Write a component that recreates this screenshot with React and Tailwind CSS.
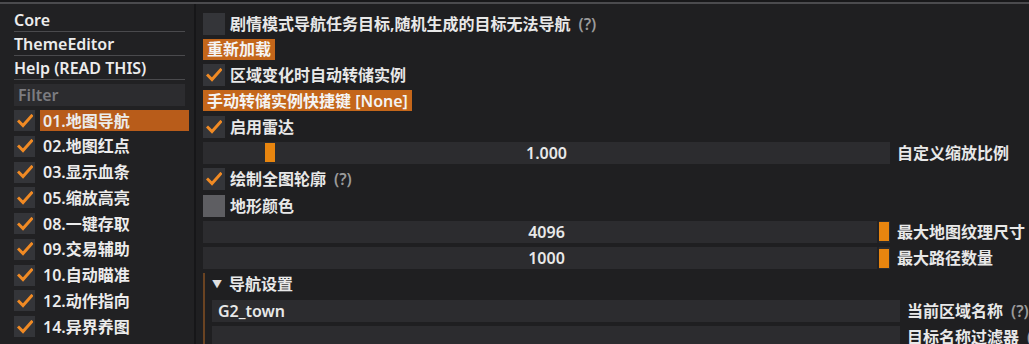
import React from "react";

const FONT = { fontFamily: '"Noto Sans", "Noto Sans CJK SC", sans-serif' };

function Check() {
  return (
    <svg width="16" height="14" viewBox="0 0 16 14">
      <polyline points="2,7.5 6,11.5 14.5,2" fill="none" stroke="#f08a24" strokeWidth="3" strokeLinecap="square" />
    </svg>
  );
}

function Box({ checked, size = "w-[22px] h-[22px]" }) {
  return (
    <div className={`${size} shrink-0 bg-[#343539] flex items-center justify-center`}>
      {checked ? <Check /> : null}
    </div>
  );
}

function Help() {
  return <span className="ml-[8px] text-[16px] leading-none text-[#9a9a9a] font-semibold">(?)</span>;
}

function CheckRow({ checked, label, help }) {
  return (
    <div className="h-[22px] flex items-center">
      <Box checked={checked} />
      <span className="ml-[5px] text-[16px] leading-none text-[#e8e8e8] font-semibold whitespace-nowrap">{label}</span>
      {help ? <Help /> : null}
    </div>
  );
}

function Button({ label }) {
  return (
    <div className="h-[22px] flex items-center">
      <div className="h-[21px] px-[4px] bg-[#c4661a] flex items-center text-[16px] leading-none text-[#f4f4f4] font-semibold whitespace-nowrap">
        {label}
      </div>
    </div>
  );
}

function Slider({ value, label, thumbLeft, thumbRight }) {
  return (
    <div className="h-[22px] flex items-center">
      <div className="relative w-[687px] h-[22px] bg-[#2c2c2f] flex items-center justify-center shrink-0">
        {thumbLeft !== undefined ? (
          <div className="absolute top-[1.5px] w-[10px] h-[19px] bg-[#e8850f]" style={{ left: thumbLeft }} />
        ) : null}
        {thumbRight ? <div className="absolute top-[1.5px] right-[1px] w-[10px] h-[19px] bg-[#e8850f]" /> : null}
        {thumbRight ? <div className="absolute top-0 right-[11px] w-[2px] h-[22px] bg-[#222225]" /> : null}
        <span className="text-[16px] leading-none text-[#e8e8e8] font-semibold">{value}</span>
      </div>
      <span className="ml-[7px] text-[16px] leading-none text-[#e8e8e8] font-semibold whitespace-nowrap">{label}</span>
    </div>
  );
}

const items = ["01.地图导航", "02.地图红点", "03.显示血条", "05.缩放高亮", "08.一键存取", "09.交易辅助", "10.自动瞄准", "12.动作指向", "14.异界养图"];

export default function App() {
  return (
    <div className="w-[1029px] h-[344px] overflow-hidden bg-[#1f1f21] flex flex-col" style={FONT}>
      <div className="h-[2px] bg-[#18181a] shrink-0" />
      <div className="h-[1.5px] bg-[#4b4b4e] shrink-0" />
      <div className="flex flex-1 min-h-0">
        <div className="w-[194px] shrink-0 bg-[#212123] pl-[14px] pr-[5px] pt-[4.5px] flex flex-col">
          {["Core", "ThemeEditor", "Help (READ THIS)"].map((t) => (
            <div key={t} className="h-[24px] mr-[4px] flex items-center border-b-[1.5px] border-[#4a4a4d] text-[16px] leading-none text-[#ececec] font-semibold whitespace-nowrap">
              {t}
            </div>
          ))}
          <div className="mt-[4px] mr-[4px] h-[22px] bg-[#2c2c2f] flex items-center pl-[4px] text-[16px] leading-none text-[#7c7c80] font-semibold">
            Filter
          </div>
          <div className="mt-[4px] flex flex-col gap-[4.75px]">
            {items.map((t, i) => (
              <div key={t} className="h-[21px] flex items-center">
                <Box checked size="w-[21px] h-[21px]" />
                <div className={`ml-[5px] flex-1 h-[21px] flex items-center pl-[3px] text-[16px] leading-none text-[#ececec] font-semibold whitespace-nowrap ${i === 0 ? "bg-[#b85c1a]" : ""}`}>
                  {t}
                </div>
              </div>
            ))}
          </div>
        </div>
        <div className="w-[2px] shrink-0 bg-[#161618]" />
        <div className="flex-1 min-w-0 pl-[7px] pt-[9px] flex flex-col gap-[4.3px] overflow-hidden">
          <CheckRow checked={false} label="剧情模式导航任务目标,随机生成的目标无法导航" help />
          <Button label="重新加载" />
          <CheckRow checked label="区域变化时自动转储实例" />
          <Button label="手动转储实例快捷键 [None]" />
          <CheckRow checked label="启用雷达" />
          <Slider value="1.000" label="自定义缩放比例" thumbLeft={62} />
          <CheckRow checked label="绘制全图轮廓" help />
          <div className="h-[22px] flex items-center">
            <div className="w-[22px] h-[22px] shrink-0 bg-[#5e5e62]" />
            <span className="ml-[5px] text-[16px] leading-none text-[#e8e8e8] font-semibold">地形颜色</span>
          </div>
          <Slider value="4096" label="最大地图纹理尺寸" thumbRight />
          <Slider value="1000" label="最大路径数量" thumbRight />
          <div className="flex flex-col border-l-2 border-[#6a4322] pl-[7px] gap-[4.3px]">
            <div className="h-[22px] flex items-center">
              <span className="text-[10px] leading-none text-[#e0e0e0]">▼</span>
              <span className="ml-[7px] text-[16px] leading-none text-[#e8e8e8] font-semibold">导航设置</span>
            </div>
            <div className="h-[22px] flex items-center">
              <div className="w-[688px] h-[22px] shrink-0 bg-[#2c2c2f] flex items-center pl-[6px] text-[16px] leading-none text-[#e8e8e8] font-semibold">
                G2_town
              </div>
              <span className="ml-[7px] text-[16px] leading-none text-[#e8e8e8] font-semibold whitespace-nowrap">当前区域名称</span>
              <Help />
            </div>
            <div className="h-[22px] flex items-center">
              <div className="w-[688px] h-[22px] shrink-0 bg-[#2c2c2f]" />
              <span className="ml-[7px] text-[16px] leading-none text-[#e8e8e8] font-semibold whitespace-nowrap">目标名称过滤器</span>
              <Help />
            </div>
          </div>
        </div>
      </div>
    </div>
  );
}
